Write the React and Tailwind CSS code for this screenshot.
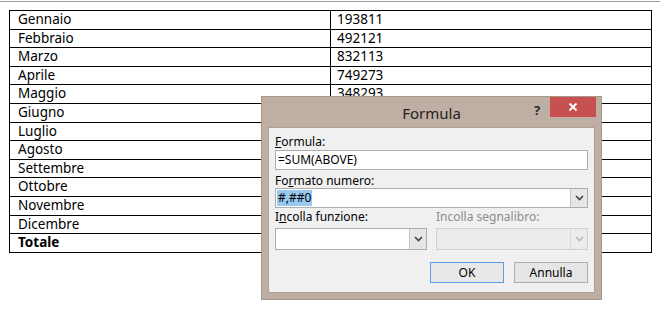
import React from 'react';

// values from Giugno on sit under the dialog
const rows = [
  ['Gennaio', '193811'],
  ['Febbraio', '492121'],
  ['Marzo', '832113'],
  ['Aprile', '749273'],
  ['Maggio', '348293'],
  ['Giugno', ''],
  ['Luglio', ''],
  ['Agosto', ''],
  ['Settembre', ''],
  ['Ottobre', ''],
  ['Novembre', ''],
  ['Dicembre', ''],
];

const Chevron = ({ disabled }) => (
  <svg width="9" height="6" viewBox="0 0 9 6">
    <path d="M1 1 L4.5 4.5 L8 1" fill="none" stroke={disabled ? '#b8b8b8' : '#404040'} strokeWidth="1.6" />
  </svg>
);

const DropBox = ({ disabled }) => (
  <div
    className={`w-[17px] self-stretch flex items-center justify-center border-l ${
      disabled ? 'border-[#d9d9d9] bg-[#ececec]' : 'border-[#c4c4c4] bg-[#e6e6e6]'
    }`}
  >
    <Chevron disabled={disabled} />
  </div>
);

const FormulaDialog = () => (
  <div className="absolute left-[261px] top-[96px] w-[341px] h-[204px] bg-[#bfaea3] border border-[#a99889] flex flex-col font-['Noto_Sans',sans-serif]">
    {/* title bar */}
    <div className="relative h-[30px] flex items-center justify-center">
      <span className="text-[15px] text-[#222] leading-none mt-[2px]">Formula</span>
      <span className="absolute left-[272px] top-[4px] text-[13px] font-bold text-[#2a2a2a]">?</span>
      <div className="absolute right-[5px] top-0 w-[46px] h-[20px] bg-[#c75050] flex items-center justify-center">
        <svg width="10" height="10" viewBox="0 0 10 10">
          <path d="M1.5 1.5 L8.5 8.5 M8.5 1.5 L1.5 8.5" stroke="#fff" strokeWidth="1.8" />
        </svg>
      </div>
    </div>

    {/* content */}
    <div className="mx-[6px] mb-[6px] flex-1 bg-[#f0f0f0] border border-[#b09f93] px-[6px] text-[12px] leading-[14px] text-black">
      <div className="pt-[7px]">
        <span className="underline">F</span>ormula:
      </div>
      <div className="mt-[1px] h-[20px] bg-white border border-[#abadb3] flex items-center px-[2px]">
        =SUM(ABOVE)
      </div>

      <div className="mt-[4px]">
        Fo<span className="underline">r</span>mato numero:
      </div>
      <div className="h-[20px] bg-white border border-[#abadb3] flex items-center">
        <span className="ml-[1px] bg-[#99c9ef] px-[1px] leading-[16px]">#,##0</span>
        <div className="flex-1" />
        <DropBox />
      </div>

      <div className="mt-[2px] flex">
        <div className="w-[152px]">
          I<span className="underline">n</span>colla funzione:
        </div>
        <div className="ml-[9px] text-[#8d8d8d]">Incolla segnalibro:</div>
      </div>
      <div className="mt-[4px] flex">
        <div className="w-[152px] h-[22px] bg-white border border-[#abadb3] flex">
          <div className="flex-1" />
          <DropBox />
        </div>
        <div className="ml-[9px] flex-1 h-[22px] bg-[#ececec] border border-[#d0d0d0] flex">
          <div className="flex-1" />
          <DropBox disabled />
        </div>
      </div>

      <div className="mt-[12px] flex justify-end gap-[10px]">
        <button className="w-[74px] h-[21px] border border-[#569de5] bg-[#e8e8e8] text-[12px] leading-none">
          OK
        </button>
        <button className="w-[74px] h-[21px] border border-[#adadad] bg-[#e5e5e5] text-[12px] leading-none">
          Annulla
        </button>
      </div>
    </div>
  </div>
);

export default function App() {
  return (
    <div className="relative w-[660px] h-[330px] bg-white overflow-hidden">
      <div className="h-[2px] border-t border-[#9c9c9c] mt-[1px]" />
      <div className="ml-[9px] mt-[7px] w-[643px] border-b border-black font-['Noto_Sans',sans-serif] text-[13.5px] text-black">
        {rows.map(([m, v]) => (
          <div key={m} className="flex h-[18.6px] border-t border-l border-r border-black leading-[17px]">
            <div className="w-[321px] border-r border-black pl-[8px]">{m}</div>
            <div className="flex-1 pl-[6px]">{v}</div>
          </div>
        ))}
        <div className="flex h-[18.6px] border-t border-l border-r border-black leading-[17px] font-bold">
          <div className="w-[321px] border-r border-black pl-[8px]">Totale</div>
          <div className="flex-1 pl-[6px]" />
        </div>
      </div>
      <FormulaDialog />
    </div>
  );
}
